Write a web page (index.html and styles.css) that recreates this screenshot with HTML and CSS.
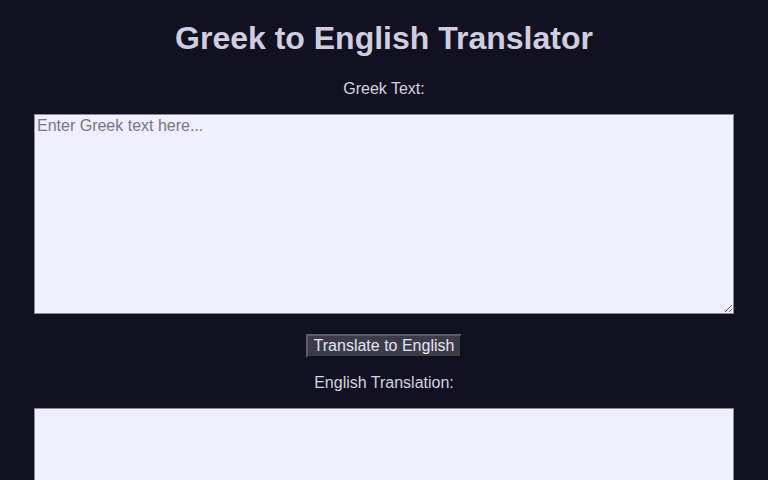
FILE: index.html
```html
<!DOCTYPE html>
<html lang="en">
<head>
    <meta charset="UTF-8">
    <meta name="viewport" content="width=device-width, initial-scale=1.0">
    <title>Greek to English Translator</title>
    <link rel="stylesheet" href="styles.css">
</head>
<body>
    <h1 class="title">Greek to English Translator</h1>
    <label class="field-label" for="greekText">Greek Text:</label>
    <textarea class="text-box" id="greekText" placeholder="Enter Greek text here..."></textarea>
    <button class="translate-button" type="button">Translate to English</button>
    <label class="field-label" for="englishText">English Translation:</label>
    <textarea class="text-box" id="englishText" readonly></textarea>
</body>
</html>
```

FILE: styles.css
```css
body {
    margin: 0;
    padding: 0 8px;
    background-color: #12111f;
    color: #d4d3e6;
    font-family: "Liberation Sans", Arial, sans-serif;
    text-align: center;
}

.title {
    font-size: 32px;
    font-weight: bold;
    margin: 20px 0 23px;
    line-height: 37px;
    color: #cfcee0;
}

.field-label {
    display: block;
    font-size: 16px;
    line-height: 18px;
    margin-bottom: 16px;
}

.text-box {
    display: block;
    box-sizing: border-box;
    width: 700px;
    height: 200px;
    margin: 0 auto;
    padding: 2px;
    background-color: #f0efff;
    color: #12111f;
    border: 1px solid #8c8ba0;
    font-family: "Liberation Sans", Arial, sans-serif;
    font-size: 16px;
}
.text-box::placeholder {
    color: #767585;
}

.translate-button {
    display: inline-block;
    margin: 20px 0 16px;
    padding: 1px 6px;
    background-color: #3b3b4a;
    color: #e6e5f2;
    border: 2px outset #5a5a6a;
    font-family: "Liberation Sans", Arial, sans-serif;
    font-size: 16px;
    line-height: 18px;
    cursor: pointer;
}
```
